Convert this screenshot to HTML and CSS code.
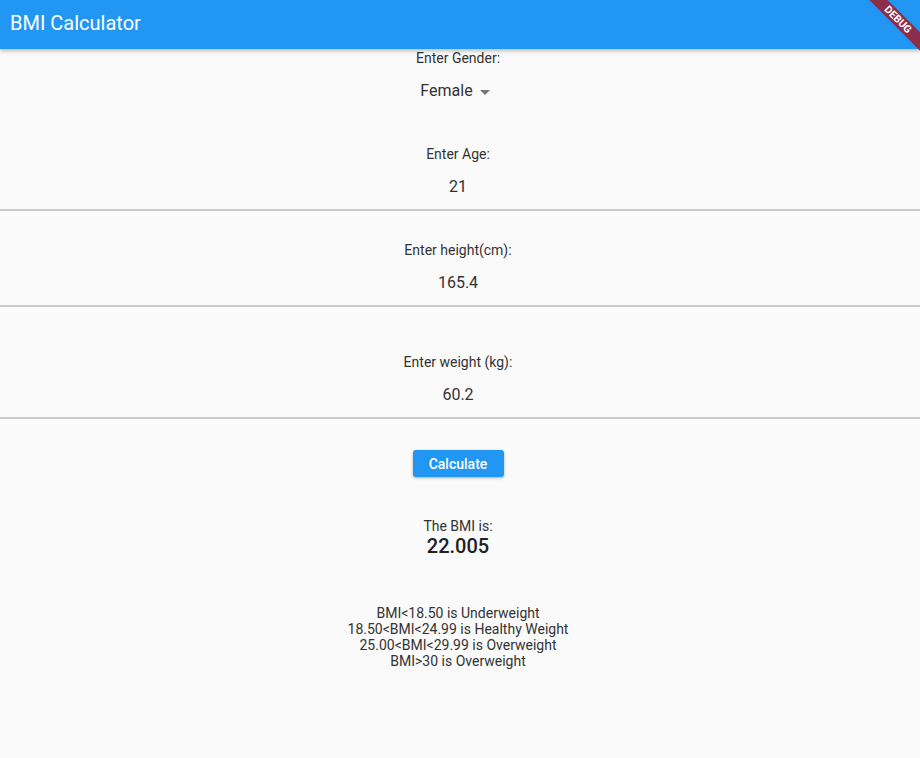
FILE: index.html
```html
<!DOCTYPE html>
<html>
<head>
<meta charset="utf-8">
<link rel="stylesheet" href="styles.css">
</head>
<body>
<div class="app">
  <header class="appbar">
    <div class="title">BMI Calculator</div>
  </header>
  <main class="content">
    <div class="label first">Enter Gender:</div>
    <div class="dropdown">
      <span class="dd-text">Female</span>
      <svg class="dd-icon" width="24" height="24" viewBox="0 0 24 24"><path d="M7 10l5 5 5-5z" fill="#757575"/></svg>
    </div>
    <div class="label gap32">Enter Age:</div>
    <div class="field">21</div>
    <div class="label gap31">Enter height(cm):</div>
    <div class="field">165.4</div>
    <div class="label gap47">Enter weight (kg):</div>
    <div class="field">60.2</div>
    <button class="btn">Calculate</button>
    <div class="label result-label">The BMI is:</div>
    <div class="result">22.005</div>
    <div class="legend">
      <div>BMI&lt;18.50 is Underweight</div>
      <div>18.50&lt;BMI&lt;24.99 is Healthy Weight</div>
      <div>25.00&lt;BMI&lt;29.99 is Overweight</div>
      <div>BMI&gt;30 is Overweight</div>
    </div>
  </main>
  <div class="banner-clip"><div class="banner">DEBUG</div></div>
</div>
</body>
</html>
```
FILE: styles.css
```css
html, body {
  margin: 0;
  padding: 0;
}
body {
  width: 920px;
  height: 758px;
  overflow: hidden;
  background: #fafafa;
  font-family: Roboto, "Liberation Sans", sans-serif;
  color: rgba(0,0,0,0.87);
}
.app {
  position: relative;
  width: 920px;
  height: 758px;
}
.appbar {
  height: 49px;
  background: #2196f3;
  box-shadow: 0 2px 4px rgba(0,0,0,0.25);
  display: flex;
  align-items: center;
  position: relative;
  z-index: 1;
}
.title {
  color: #fff;
  font-size: 20px;
  line-height: 24px;
  padding-left: 10px;
  margin-top: -4px;
}
.content {
  display: flex;
  flex-direction: column;
  align-items: center;
  padding-right: 4px;
}
.label {
  font-size: 14px;
  line-height: 16px;
  height: 16px;
  color: #333;
}
.label.first { margin-top: 1px; }
.gap32 { margin-top: 32px; }
.gap31 { margin-top: 31px; }
.gap47 { margin-top: 47px; }
.dropdown {
  height: 48px;
  display: flex;
  align-items: center;
  margin-left: 1px;
  padding-top: 2px;
  box-sizing: border-box;
}
.dd-text {
  font-size: 16px;
  line-height: 20px;
  color: #333;
}
.dd-icon {
  display: block;
  margin-top: 1px;
}
.field {
  align-self: stretch;
  margin-right: -4px;
  padding-right: 4px;
  height: 47px;
  line-height: 49px;
  text-align: center;
  font-size: 16px;
  color: #333;
  border-bottom: 2px solid #cacaca;
}
.btn {
  margin-top: 31px;
  width: 91px;
  height: 27px;
  border: none;
  border-radius: 3px;
  background: #2196f3;
  color: #fff;
  font-family: Roboto, "Liberation Sans", sans-serif;
  font-size: 14px;
  font-weight: 500;
  padding: 0;
  box-shadow: 0 1px 3px rgba(0,0,0,0.3);
}
.result-label { margin-top: 41px; }
.result {
  margin-top: 0;
  font-size: 20px;
  line-height: 24px;
  font-weight: 500;
  color: #212121;
}
.legend {
  margin-top: 47px;
  font-size: 14px;
  line-height: 16px;
  text-align: center;
  color: #333;
}
.banner-clip {
  position: absolute;
  top: 0;
  right: 0;
  width: 80px;
  height: 80px;
  overflow: hidden;
  z-index: 2;
}
.banner {
  position: absolute;
  left: -22px;
  top: 13px;
  width: 160px;
  height: 13px;
  line-height: 13px;
  transform-origin: 80px 6.5px;
  transform: rotate(45deg);
  background: #8c2d4c;
  color: #fff;
  font-family: Roboto, "Liberation Sans", sans-serif;
  font-size: 10.5px;
  font-weight: 700;
  text-align: center;
}
```
